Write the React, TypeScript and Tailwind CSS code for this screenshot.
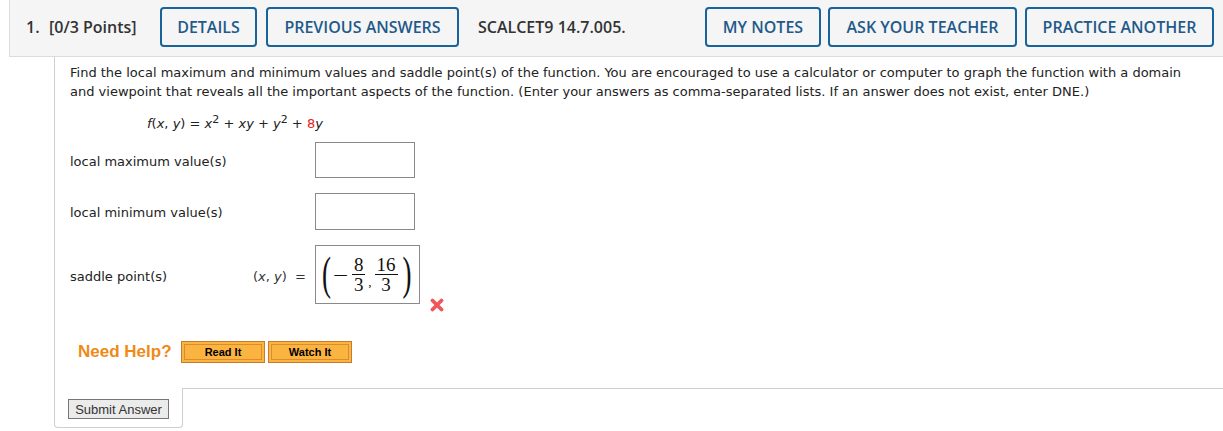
import React from 'react';

const headBtn =
  'h-[40px] flex items-center justify-center border-2 border-[#17639a] rounded-[4px] text-[#1f5a8a] bg-[#f5f5f5] text-[16px] font-semibold';

function Frac({ num, den, w }: { num: string; den: string; w: string }) {
  return (
    <div className={`flex flex-col ${w}`}>
      <div className="leading-[19px] text-center">{num}</div>
      <div className="h-px bg-[#111]" />
      <div className="leading-[19px] text-center">{den}</div>
    </div>
  );
}

function CrossMark() {
  return (
    <svg width="14" height="14" viewBox="0 0 14 14">
      <path d="M2.5 2.5 L11.5 11.5 M11.5 2.5 L2.5 11.5" stroke="#f0575b" strokeWidth="3.8" strokeLinecap="round" />
    </svg>
  );
}

export default function App() {
  return (
    <div className="bg-white w-[1223px] h-[431px] overflow-hidden text-[#222]">
      {/* question header */}
      <div className="ml-[9px] h-[57px] pb-[2px] pr-[9px] bg-[#f5f5f5] border-l border-b border-[#dcdcdc] flex items-center font-['Open_Sans',sans-serif] text-[16px]">
        <div className="w-[150px] pl-[16px] flex items-center text-[#333] font-semibold">
          <span className="w-[23px]">1.</span>
          <span>[0/3 Points]</span>
        </div>
        <button className={`${headBtn} w-[97px]`}>DETAILS</button>
        <button className={`${headBtn} w-[193px] ml-[9px]`}>PREVIOUS ANSWERS</button>
        <span className="ml-[19px] font-semibold text-[#333]">SCALCET9 14.7.005.</span>
        <div className="flex-1" />
        <button className={`${headBtn} w-[116px]`}>MY NOTES</button>
        <button className={`${headBtn} w-[189px] ml-[7px]`}>ASK YOUR TEACHER</button>
        <button className={`${headBtn} w-[189px] ml-[8px]`}>PRACTICE ANOTHER</button>
      </div>

      <div className="ml-[54px]">
        <div className="border-l border-[#cfcfcf] pt-[6px] pl-[15px] pb-[25px] font-['DejaVu_Sans',sans-serif] text-[13px]">
          <p className="leading-[19px] pr-[22px]">
            Find the local maximum and minimum values and saddle point(s) of the function. You are encouraged to use a
            calculator or computer to graph the function with a domain and viewpoint that reveals all the important
            aspects of the function. (Enter your answers as comma-separated lists. If an answer does not exist, enter
            DNE.)
          </p>

          <div className="mt-[13px] h-[19px] leading-[19px] pl-[77px]">
            <i>f</i>(<i>x</i>,&nbsp;<i>y</i>) = <i>x</i>
            <sup className="text-[11px]">2</sup> + <i>xy</i> + <i>y</i>
            <sup className="text-[11px]">2</sup> + <span className="text-[#e8201c]">8</span>
            <i>y</i>
          </div>

          <div className="mt-[9px] flex items-center">
            <span className="w-[245px] pt-[3px]">local maximum value(s)</span>
            <div className="w-[100px] h-[36px] border border-[#8a8a8a] bg-white" />
          </div>

          <div className="mt-[15px] flex items-center">
            <span className="w-[245px] pt-[2px]">local minimum value(s)</span>
            <div className="w-[100px] h-[37px] border border-[#8a8a8a] bg-white" />
          </div>

          <div className="mt-[15px] flex items-start">
            <span className="w-[183px] h-[59px] flex items-center pt-[5px]">saddle point(s)</span>
            <span className="w-[62px] h-[59px] flex items-center pt-[5px] text-[#333]">
              (<i>x</i>,&nbsp;<i>y</i>)&nbsp;&nbsp;=
            </span>
            <div className="w-[105px] h-[59px] border border-[#8a8a8a] bg-white flex items-center pl-[6px] font-['Liberation_Serif',serif] text-[19px] text-[#111]">
              <span className="text-[27px] leading-none scale-y-[1.7] font-light">(</span>
              <span className="ml-[4px] mr-[6px] text-[20px] scale-x-[1.35]">−</span>
              <Frac num="8" den="3" w="w-[13px]" />
              <span className="mt-[14px] ml-[3px] mr-[3px] text-[13px]">,</span>
              <Frac num="16" den="3" w="w-[23px]" />
              <span className="ml-[5px] text-[27px] leading-none scale-y-[1.7] font-light">)</span>
            </div>
            <div className="pt-[53px] ml-[10px]">
              <CrossMark />
            </div>
          </div>

          <div className="mt-[29px] flex items-center h-[22px] font-['Liberation_Sans',sans-serif]">
            <span className="ml-[8px] w-[103px] text-[17px] font-bold text-[#ef8a16]">Need Help?</span>
            <button className="w-[84px] h-[22px] border border-[#c97a2c] p-[2px] bg-[#fcb441]">
              <span className="h-full border border-[#d98d32] flex items-center justify-center text-[11px] font-bold text-black">
                Read It
              </span>
            </button>
            <button className="ml-[3px] w-[84px] h-[22px] border border-[#c97a2c] p-[2px] bg-[#fcb441]">
              <span className="h-full border border-[#d98d32] flex items-center justify-center text-[11px] font-bold text-black">
                Watch It
              </span>
            </button>
          </div>
        </div>

        <div className="flex items-start">
          <div className="w-[129px] h-[40px] border-l border-r border-b border-[#cfcfcf] rounded-b-[4px] pt-[11px] pl-[13px]">
            <button className="block w-[101px] h-[20px] border border-[#767676] bg-[#ebebeb] font-['Liberation_Sans',sans-serif] text-[13px] leading-none text-[#333]">
              Submit Answer
            </button>
          </div>
          <div className="flex-1 border-t border-[#cfcfcf] -ml-px" />
        </div>
      </div>
    </div>
  );
}
